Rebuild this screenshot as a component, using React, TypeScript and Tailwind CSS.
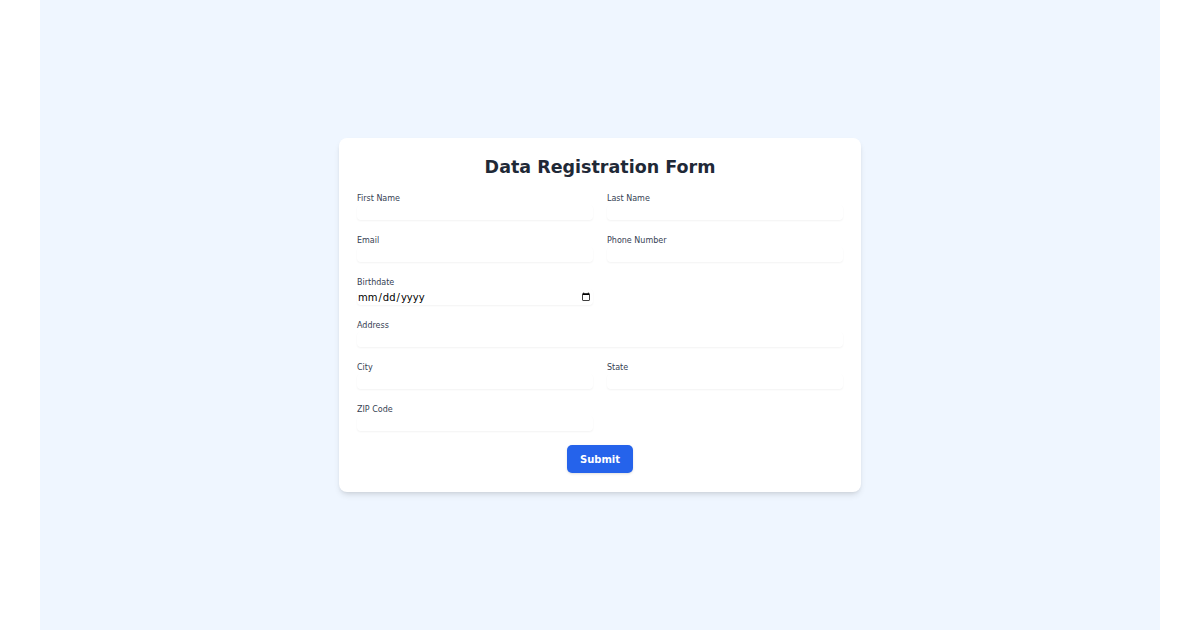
import React from 'react';

type Field = { id: string; label: string; type?: string; wide?: boolean; date?: boolean };

const fields: Field[] = [
  { id: 'firstName', label: 'First Name' },
  { id: 'lastName', label: 'Last Name' },
  { id: 'email', label: 'Email', type: 'email' },
  { id: 'phone', label: 'Phone Number', type: 'tel' },
  { id: 'birthdate', label: 'Birthdate', type: 'date', date: true },
  { id: 'address', label: 'Address', wide: true },
  { id: 'city', label: 'City' },
  { id: 'state', label: 'State' },
  { id: 'zip', label: 'ZIP Code' },
];

function FormField({ field }: { field: Field }) {
  return (
    <div className={field.wide ? 'col-span-2' : ''}>
      <label htmlFor={field.id} className="block text-[8px] leading-[13px] text-gray-700">
        {field.label}
      </label>
      <input
        id={field.id}
        type={field.type ?? 'text'}
        className={`block w-full rounded-[4px] bg-white p-0 text-[10px] text-black shadow-xs outline-none ${
          field.date ? 'h-[16px]' : 'h-[15px]'
        }`}
      />
    </div>
  );
}

export default function App() {
  return (
    <div className="min-h-screen bg-white font-['DejaVu_Sans',sans-serif]">
      <div className="mx-10 flex min-h-screen items-center justify-center bg-[#eff6ff]">
        <form className="w-[522px] rounded-lg bg-white px-[18px] pt-[18px] pb-[19px] shadow-md">
          <h1 className="mb-[13px] text-center text-[17.5px] leading-[23px] font-bold text-[#1f2937]">
            Data Registration Form
          </h1>
          <div className="grid grid-cols-2 gap-x-[14px] gap-y-[14px]">
            {fields.map((f) => (
              <FormField key={f.id} field={f} />
            ))}
          </div>
          <div className="mt-[14px] flex justify-center">
            <button
              type="submit"
              className="h-[28px] w-[66px] rounded-[5px] bg-[#2563eb] text-[10px] font-bold text-white shadow-sm"
            >
              Submit
            </button>
          </div>
        </form>
      </div>
    </div>
  );
}
